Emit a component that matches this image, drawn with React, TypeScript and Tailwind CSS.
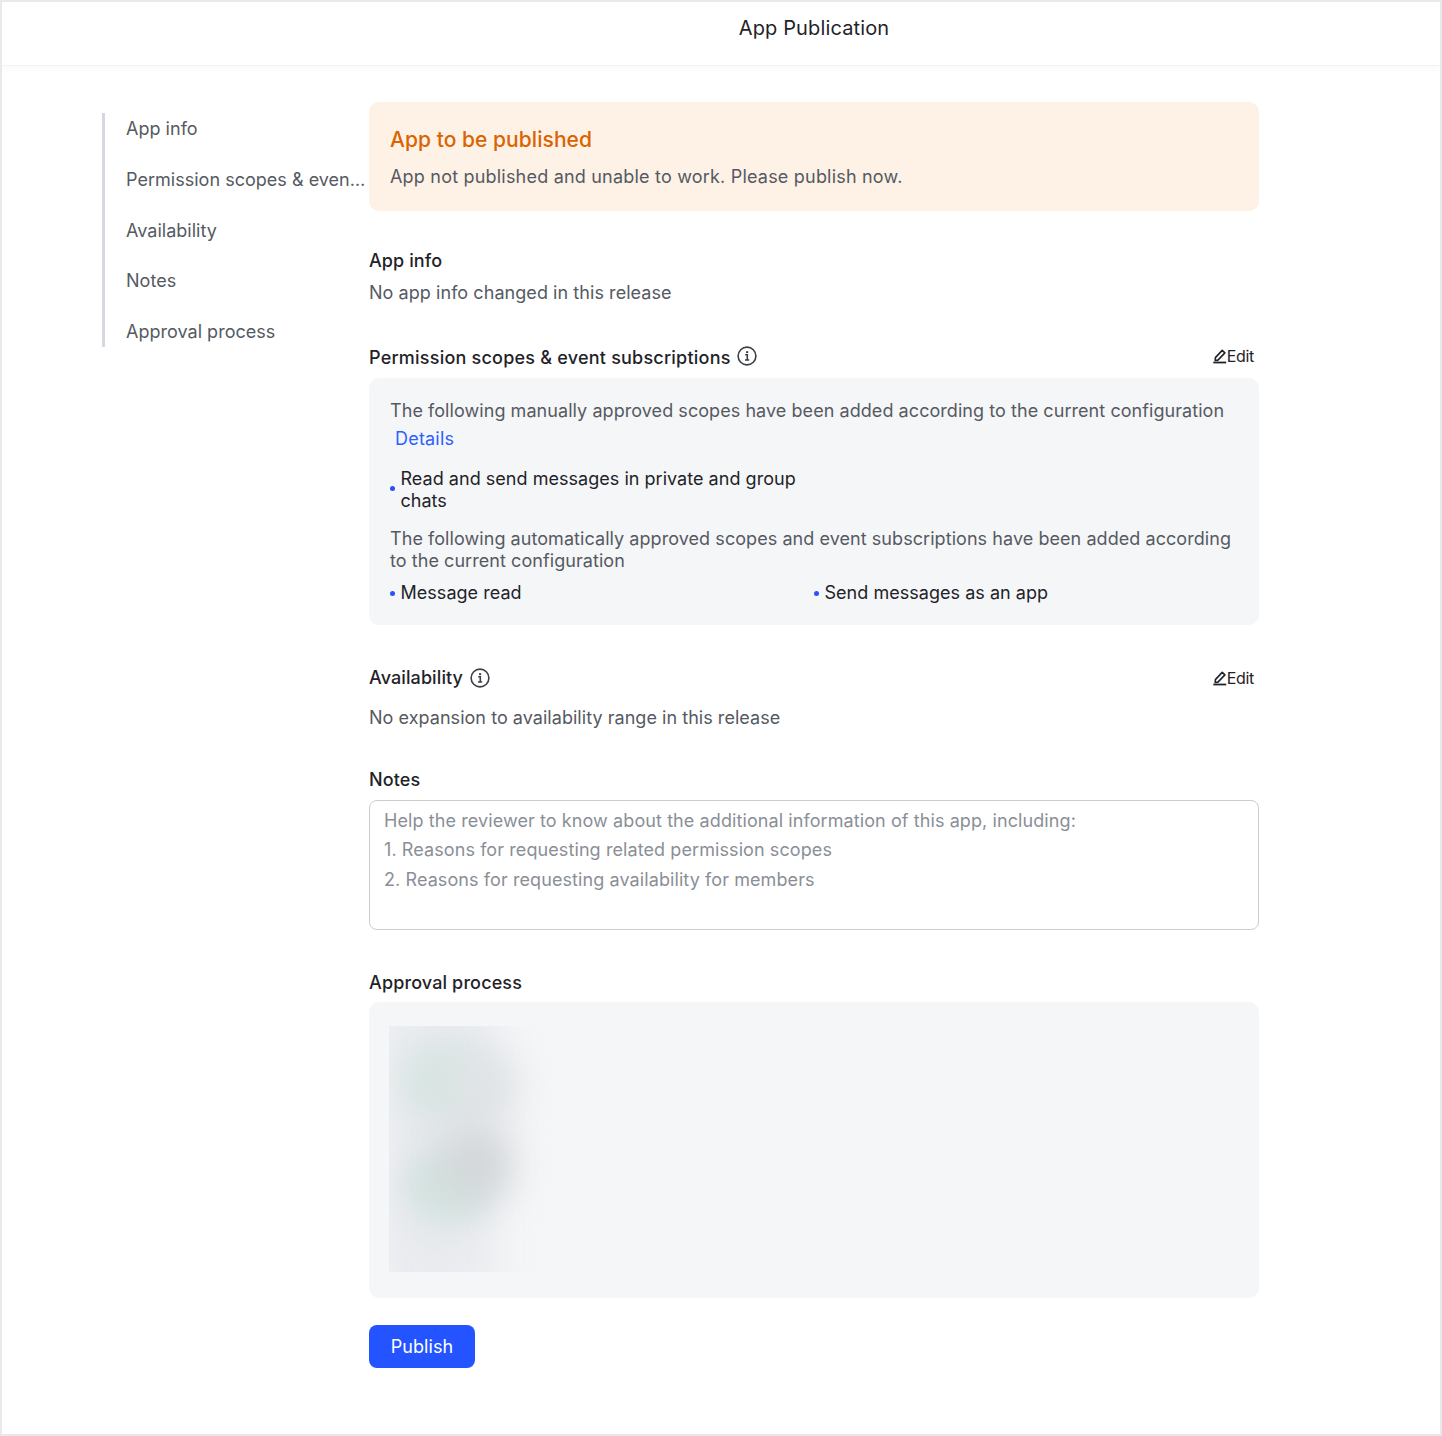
const navItems = ['App info', 'Permission scopes & event subscriptions', 'Availability', 'Notes', 'Approval process'];

function InfoIcon({ className = '' }: { className?: string }) {
  return (
    <svg viewBox="0 0 20 20" className={`w-5 h-5 text-[#3b3f46] ${className}`} fill="none" stroke="currentColor">
      <circle cx="10" cy="10" r="8.9" strokeWidth="1.6" />
      <path d="M8.2 8.8h2.1v5.2M8 14h4.2" strokeWidth="1.6" />
      <path d="M10.1 5.2v1.9" strokeWidth="2.1" />
    </svg>
  );
}

function EditLink({ className = '' }: { className?: string }) {
  return (
    <button className={`flex items-center text-base text-[#1f2329] tracking-[-0.3px] mr-[5px] ${className}`}>
      <svg viewBox="0 0 14 16" className="w-[14px] h-4" fill="none" stroke="currentColor">
        <path d="M2.4 9.6 9.2 2.4l2.7 2.5-7 7.2-2.7.3z" strokeWidth="1.6" strokeLinejoin="round" />
        <path d="M0.3 14.5h12.9" strokeWidth="1.8" />
      </svg>
      <span>Edit</span>
    </button>
  );
}

function Scope({ children, className = '', dotClass = '' }: { children: React.ReactNode; className?: string; dotClass?: string }) {
  return (
    <div className={`flex items-center gap-[6px] text-[18px] leading-[22px] tracking-[0.03px] text-[#1f2329] ${className}`}>
      <span className={`w-[5px] h-[5px] shrink-0 rounded-full bg-[#2454ff] -ml-[0.5px] ${dotClass}`} />
      <span>{children}</span>
    </div>
  );
}

export default function App() {
  return (
    <div className="w-[1442px] h-[1436px] bg-white border-2 border-[#e8e9eb] font-['Inter','Noto_Sans',sans-serif] text-[#1f2329] tracking-[0.06px] overflow-hidden">
      <header className="h-[64px] border-b border-[#f2f3f5] shadow-[0_4px_8px_rgba(31,35,41,0.025)] pl-[367px] w-full">
        <div className="w-[890px] text-center text-[20px] leading-[24px] tracking-[0.14px] pt-[14px]">App Publication</div>
      </header>

      <div className="flex pl-[100px] pt-[36px]">
        <nav className="w-[267px] shrink-0 pt-[11px]">
          <ul className="border-l-[3px] border-[#d5d8df] w-[264px] h-[234px] pl-[21px] flex flex-col">
            {navItems.map((item) => (
              <li key={item} className="h-[50.75px] shrink-0 w-[241px] truncate text-[18px] leading-[32px] tracking-[0.02px] text-[#555a62]">
                {item}
              </li>
            ))}
          </ul>
        </nav>

        <main className="w-[890px] shrink-0">
          <section className="h-[109px] rounded-[10px] bg-[#fef1e6] pl-[21px] pt-[24px]">
            <h2 className="text-[21px] leading-[28px] font-medium tracking-[0.05px] text-[#d96400]">App to be published</h2>
            <p className="mt-[12px] text-[18px] leading-[22px] tracking-[0.2px] text-[#555a62]">App not published and unable to work. Please publish now.</p>
          </section>

          <section className="mt-[38px]">
            <h3 className="text-[18px] leading-[24px] font-medium tracking-[0.1px]">App info</h3>
            <p className="mt-[8px] text-[18px] leading-[24px] text-[#555a62]">No app info changed in this release</p>
          </section>

          <section className="mt-[41px]">
            <div className="flex items-center justify-between h-[24px]">
              <div className="flex items-center gap-[6px]">
                <h3 className="text-[18px] leading-[24px] font-medium tracking-[0.22px]">Permission scopes &amp; event subscriptions</h3>
                <InfoIcon className="-mt-[4px]" />
              </div>
              <EditLink className="-mt-[4px]" />
            </div>
            <div className="mt-[8px] h-[247px] rounded-[10px] bg-[#f5f6f8] px-[21px] pt-[19px]">
              <p className="text-[18px] leading-[28px] text-[#555a62]">
                The following manually approved scopes have been added according to the current configuration
                <br />
                <span className="text-[#2f5fff] ml-[5px] tracking-[0.2px]">Details</span>
              </p>
              <Scope className="mt-[15px] w-[424px]" dotClass="mt-[-3px]">Read and send messages in private and group chats</Scope>
              <p className="mt-[16px] text-[18px] leading-[22px] text-[#555a62]">
                The following automatically approved scopes and event subscriptions have been added according to the current configuration
              </p>
              <div className="mt-[10px] grid grid-cols-2 w-[848px]">
                <Scope>Message read</Scope>
                <Scope>Send messages as an app</Scope>
              </div>
            </div>
          </section>

          <section className="mt-[41px]">
            <div className="flex items-center justify-between h-[24px]">
              <div className="flex items-center gap-[7px]">
                <h3 className="text-[18px] leading-[24px] font-medium tracking-[0.1px]">Availability</h3>
                <InfoIcon />
              </div>
              <EditLink />
            </div>
            <p className="mt-[16px] text-[18px] leading-[24px] tracking-[0.04px] text-[#555a62]">No expansion to availability range in this release</p>
          </section>

          <section className="mt-[38px]">
            <h3 className="text-[18px] leading-[24px] font-medium tracking-[0.1px]">Notes</h3>
            <div className="mt-[8px] h-[130px] rounded-[8px] border border-[#c9cdd4] px-[14px] pt-[5px] text-[18px] leading-[29.3px] tracking-[0.09px] text-[#8a8f97]">
              <p>Help the reviewer to know about the additional information of this app, including:</p>
              <p>1. Reasons for requesting related permission scopes</p>
              <p>2. Reasons for requesting availability for members</p>
            </div>
          </section>

          <section className="mt-[41px]">
            <h3 className="text-[18px] leading-[24px] font-medium tracking-[0.13px]">Approval process</h3>
            <div className="mt-[7px] h-[296px] rounded-[10px] bg-[#f5f6f8] pl-[20px] pt-[24px]">
              <div className="relative w-[188px] h-[246px] overflow-hidden">
                <div className="absolute left-[-10px] top-[-20px] w-[115px] h-[290px] bg-[#e8eaee] blur-[20px]" />
                <div className="absolute left-[12px] top-[20px] w-[85px] h-[70px] rounded-full bg-[#d6e5e2] blur-[16px]" />
                <div className="absolute left-[55px] top-[25px] w-[75px] h-[70px] rounded-full bg-[#e0e3e5] blur-[18px]" />
                <div className="absolute left-[16px] top-[125px] w-[85px] h-[70px] rounded-full bg-[#d3e3e0] blur-[14px]" />
                <div className="absolute left-[50px] top-[100px] w-[75px] h-[75px] rounded-full bg-[#d4d7d9] blur-[18px]" />
              </div>
            </div>
          </section>

          <button className="mt-[27px] w-[106px] h-[43px] rounded-[8px] bg-[#2454ff] text-white text-[18px]">Publish</button>
        </main>
      </div>
    </div>
  );
}
